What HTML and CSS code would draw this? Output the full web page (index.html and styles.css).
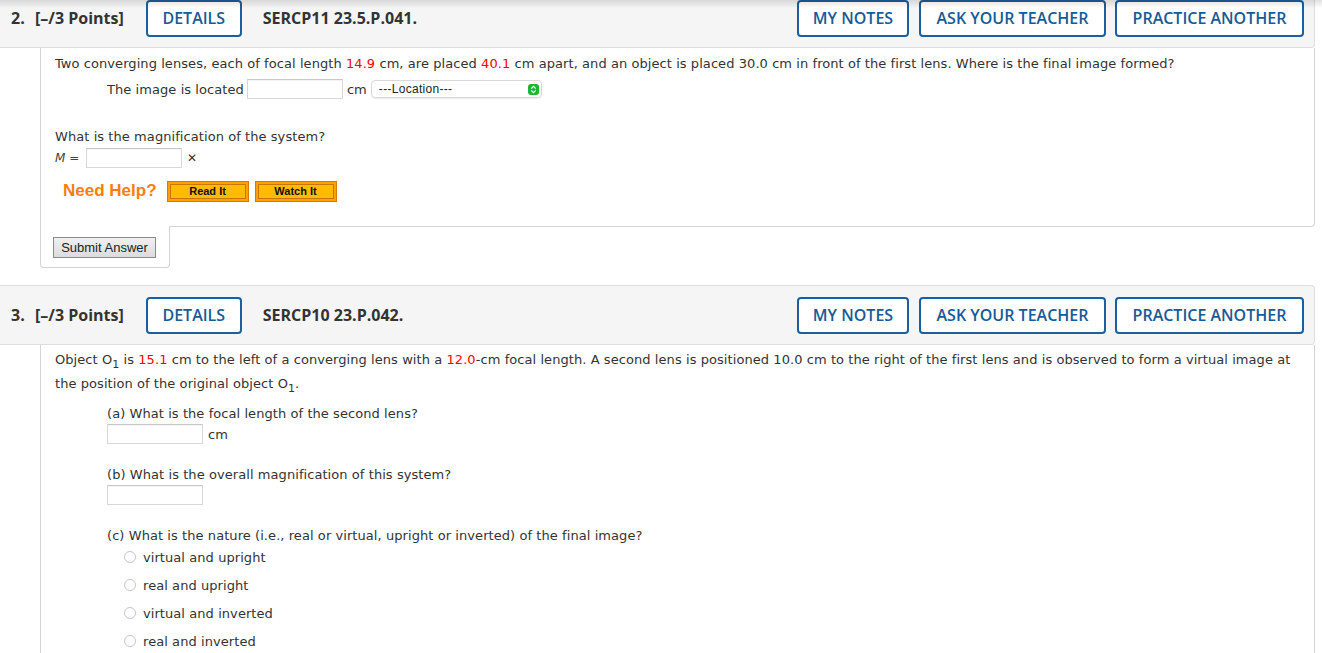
FILE: index.html
```html
<!DOCTYPE html>
<html>
<head>
<meta charset="utf-8">
<link rel="stylesheet" href="styles.css">
</head>
<body>
<div class="topshade"></div>
<div class="page">
  <div class="q-head first">
    <span class="q-num">2.</span>
    <span class="q-pts">[–/3 Points]</span>
    <button class="hbtn details">DETAILS</button>
    <span class="q-code">SERCP11 23.5.P.041.</span>
    <span class="spacer"></span>
    <button class="hbtn notes">MY NOTES</button>
    <button class="hbtn ask">ASK YOUR TEACHER</button>
    <button class="hbtn practice">PRACTICE ANOTHER</button>
  </div>
  <div class="q-body q2">
    <p class="stem">Two converging lenses, each of focal length <span class="red">14.9</span> cm, are placed <span class="red">40.1</span> cm apart, and an object is placed 30.0 cm in front of the first lens. Where is the final image formed?</p>
    <div class="row loc-row">
      <span class="lbl">The image is located</span>
      <span class="inp w96"></span>
      <span class="unit">cm</span>
      <span class="select"><span class="sel-text">---Location---</span><span class="stepper"><svg width="11" height="11" viewBox="0 0 11 11"><path d="M3.2 4.6 L5.5 2.4 L7.8 4.6" fill="none" stroke="#fff" stroke-width="1.3"/><path d="M3.2 6.4 L5.5 8.6 L7.8 6.4" fill="none" stroke="#fff" stroke-width="1.3"/></svg></span></span>
    </div>
    <p class="mag-q">What is the magnification of the system?</p>
    <div class="row m-row">
      <span class="m-lbl"><i>M</i> =</span>
      <span class="inp w96"></span>
      <span class="xmark">✕</span>
    </div>
    <div class="row help-row">
      <span class="need">Need Help?</span>
      <span class="obtn read"><span class="obtn-in">Read It</span></span>
      <span class="obtn watch"><span class="obtn-in">Watch It</span></span>
    </div>
  </div>
  <div class="submit-tab"><button class="submit">Submit Answer</button></div>

  <div class="q-head second">
    <span class="q-num">3.</span>
    <span class="q-pts">[–/3 Points]</span>
    <button class="hbtn details">DETAILS</button>
    <span class="q-code">SERCP10 23.P.042.</span>
    <span class="spacer"></span>
    <button class="hbtn notes">MY NOTES</button>
    <button class="hbtn ask">ASK YOUR TEACHER</button>
    <button class="hbtn practice">PRACTICE ANOTHER</button>
  </div>
  <div class="q-body q3">
    <p class="stem2">Object O<sub>1</sub> is <span class="red">15.1</span> cm to the left of a converging lens with a <span class="red">12.0</span>-cm focal length. A second lens is positioned 10.0 cm to the right of the first lens and is observed to form a virtual image at the position of the original object O<sub>1</sub>.</p>
    <div class="part">
      <p class="pq">(a) What is the focal length of the second lens?</p>
      <div class="row ans-row"><span class="inp w96"></span><span class="unit">cm</span></div>
    </div>
    <div class="part">
      <p class="pq">(b) What is the overall magnification of this system?</p>
      <div class="row ans-row"><span class="inp w96"></span></div>
    </div>
    <div class="part">
      <p class="pq">(c) What is the nature (i.e., real or virtual, upright or inverted) of the final image?</p>
      <ul class="radios">
        <li><span class="radio"></span>virtual and upright</li>
        <li><span class="radio"></span>real and upright</li>
        <li><span class="radio"></span>virtual and inverted</li>
        <li><span class="radio"></span>real and inverted</li>
      </ul>
    </div>
  </div>
</div>
</body>
</html>
```

FILE: styles.css
```css
html, body {
  margin: 0;
  padding: 0;
  background: #fff;
}
body {
  font-family: "DejaVu Sans", Verdana, sans-serif;
  font-size: 13px;
  letter-spacing: 0.07px;
  color: #333;
  overflow: hidden;
}
.topshade {
  position: fixed;
  left: 0;
  top: 0;
  width: 100%;
  height: 8px;
  background: linear-gradient(to bottom, rgba(0,0,0,0.12), rgba(0,0,0,0));
  z-index: 10;
}
.page {
  width: 1315px;
  margin-top: -12px;
}
.q-head {
  display: flex;
  align-items: center;
  box-sizing: border-box;
  height: 60px;
  padding: 10px 10px 10px 11px;
  background: #f5f5f5;
  border: 1px solid #dedede;
  border-left: none;
  border-radius: 0 4px 4px 0;
  font-family: "Open Sans", sans-serif;
  font-weight: 700;
  font-size: 16px;
  letter-spacing: 0;
  color: #333;
}
.q-num {
  width: 24px;
}
.q-pts {
  margin-right: 22px;
}
.hbtn {
  box-sizing: border-box;
  height: 37px;
  padding: 0;
  background: #fff;
  border: 2px solid #1a5f9e;
  border-radius: 4px;
  font-family: "Open Sans", sans-serif;
  font-weight: 600;
  font-size: 16px;
  color: #155b98;
}
.details { width: 96px; }
.notes { width: 112px; }
.ask { width: 187px; margin-left: 10px; }
.practice { width: 189px; margin-left: 9px; }
.q-code {
  margin-left: 21px;
}
.spacer { flex: 1; }

.q-body {
  margin-left: 40px;
  border: 1px solid #d4d4d4;
  border-top: none;
  padding-left: 14px;
}
.q2 {
  height: 179px;
  box-sizing: border-box;
  border-radius: 0 0 4px 0;
  padding-top: 8px;
}
p { margin: 0; }
.red { color: #f00; }
.stem {
  line-height: 16px;
}
.row {
  display: flex;
  align-items: center;
}
.loc-row {
  margin-top: 7px;
  margin-left: 52px;
  height: 20px;
}
.lbl { margin-right: 3px; }
.inp {
  display: inline-block;
  box-sizing: border-box;
  height: 20px;
  background: #fff;
  border: 1px solid #d8d8d8;
  border-top-color: #c8c8c8;
  box-shadow: inset 0 1px 1px rgba(0,0,0,0.05);
}
.w96 { width: 96px; }
.unit { margin-left: 4px; }
.select {
  display: inline-flex;
  align-items: center;
  box-sizing: border-box;
  width: 171px;
  height: 18px;
  margin-left: 4px;
  border: 1px solid #d9d9d9;
  border-radius: 4px;
  box-shadow: 0 1px 1px rgba(0,0,0,0.08);
  padding-left: 7px;
  font-family: "Liberation Sans", Arial, sans-serif;
  font-size: 12px;
  letter-spacing: 0.3px;
  color: #222;
}
.sel-text { flex: 1; }
.stepper {
  display: inline-flex;
  width: 11px;
  height: 11px;
  margin-right: 2px;
  background: #1fb431;
  border-radius: 3px;
}
.mag-q {
  margin-top: 30px;
  line-height: 16px;
}
.m-row {
  margin-top: 3px;
  height: 20px;
}
.m-lbl {
  width: 31px;
  font-size: 12px;
  color: #444;
}
.m-lbl i { font-style: italic; }
.xmark {
  margin-left: 5px;
  font-size: 12px;
  color: #333;
  font-weight: 700;
}
.help-row {
  margin-top: 12px;
  margin-left: 8px;
  height: 22px;
}
.need {
  font-family: "Liberation Sans", Arial, sans-serif;
  font-weight: 700;
  font-size: 17px;
  letter-spacing: 0;
  color: #fb7e0a;
  margin-right: 10px;
}
.obtn {
  display: inline-flex;
  box-sizing: border-box;
  width: 82px;
  height: 21px;
  padding: 2px;
  background: #ff9f00;
  border: 1px solid #d87a00;
  margin-right: 6px;
}
.obtn-in {
  flex: 1;
  display: flex;
  align-items: center;
  justify-content: center;
  background: #ffbb00;
  border: 1px solid #c97700;
  font-family: "Liberation Sans", Arial, sans-serif;
  font-weight: 700;
  font-size: 11px;
  letter-spacing: 0;
  color: #111;
}
.submit-tab {
  position: relative;
  z-index: 1;
  margin-top: -1px;
  margin-left: 40px;
  width: 130px;
  height: 42px;
  box-sizing: border-box;
  background: #fff;
  border: 1px solid #d4d4d4;
  border-top: none;
  border-radius: 0 0 4px 4px;
  padding: 11px 0 0 12px;
}
.submit {
  box-sizing: border-box;
  height: 21px;
  width: 103px;
  padding: 0;
  background: linear-gradient(#f0f0f0, #dcdcdc);
  border: 1px solid #8a8a8a;
  font-family: "Liberation Sans", Arial, sans-serif;
  font-size: 13px;
  color: #222;
}
.second {
  margin-top: 17px;
}
.q3 {
  border-bottom: none;
  padding-top: 3px;
}
.stem2 {
  line-height: 24px;
}
sub {
  font-size: 11px;
  line-height: 0;
  vertical-align: -4px;
}
.part {
  margin-left: 52px;
}
.pq {
  margin-top: 10px;
  line-height: 16px;
}
.part + .part .pq {
  margin-top: 23px;
}
.ans-row {
  margin-top: 2px;
  height: 20px;
}
.ans-row .unit { margin-left: 5px; }
.radios {
  list-style: none;
  margin: -1px 0 0 17px;
  padding: 0;
}
.radios li {
  display: flex;
  align-items: center;
  height: 28px;
}
.radio {
  box-sizing: border-box;
  width: 12px;
  height: 12px;
  border: 1px solid #c4c4c4;
  border-radius: 50%;
  background: #fff;
  margin-right: 7px;
}
```
